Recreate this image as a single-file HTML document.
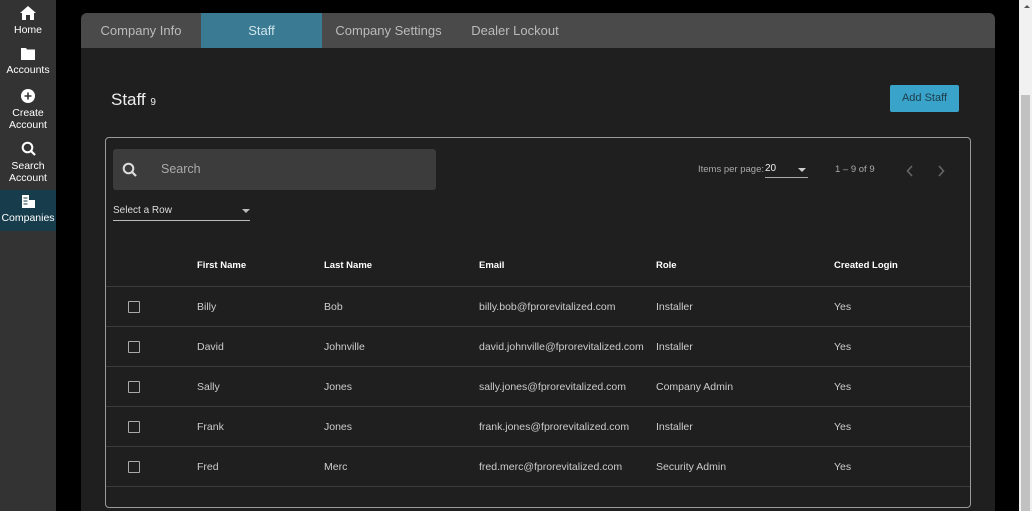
<!DOCTYPE html>
<html style="width:1032px;height:511px;overflow:hidden"><head><meta charset="utf-8"><style>
*{margin:0;padding:0;box-sizing:border-box}
body{width:1032px;height:511px;background:#000;font-family:"Liberation Sans",sans-serif;position:relative;overflow:hidden;color:#ddd}
.side{position:absolute;left:0;top:0;width:56px;height:511px;background:#333}
.nav{position:absolute;left:0;width:56px;text-align:center;font-size:10.5px;color:#fff;line-height:12px}
.nav svg{display:block;margin:0 auto 4px}
.card{position:absolute;left:81px;top:13px;width:914px;height:498px;background:#1f1f1f;border-radius:6px 6px 0 0;overflow:hidden}
.tabs{height:35px;background:#4a4a4a;position:relative}
.tab{position:absolute;top:0;height:35px;line-height:35px;font-size:13px;color:#bbb;text-align:center}
.abs{position:absolute}
.box{position:absolute;left:24px;top:124px;width:866px;height:371px;border:1px solid #9a9a9a;border-radius:4px}
.row{position:absolute;left:0;width:864px;height:40px;border-top:1px solid #3c3c3c;font-size:10.5px;color:#ccc}
.row span{position:absolute;top:14px}
.cb{position:absolute;left:22px;top:14px;width:12px;height:12px;border:1.5px solid #aaa;border-radius:1px}
.hd span{position:absolute;top:122px;font-size:9.5px;font-weight:bold;color:#fff}
.sb{position:absolute;left:1019px;top:0;width:13px;height:511px;background:#f1f1f1}
</style></head><body>
<div class="side">
 <div class="nav" style="top:6px"><svg width="16" height="14" viewBox="0 0 16 14"><path d="M8 0L0 7h2v7h4V9h4v5h4V7h2z" fill="#fff"/></svg>Home</div>
 <div class="nav" style="top:47px"><svg width="14" height="13" viewBox="0 0 14 13"><path d="M0 1h5l1 1.5h8V13H0z" fill="#fff"/></svg>Accounts</div>
 <div class="nav" style="top:89px"><svg width="14" height="14" viewBox="0 0 14 14"><circle cx="7" cy="7" r="7" fill="#fff"/><path d="M7 3.5v7M3.5 7h7" stroke="#333" stroke-width="1.6"/></svg>Create<br>Account</div>
 <div class="nav" style="top:141px"><svg width="15" height="15" viewBox="0 0 15 15"><circle cx="6.5" cy="6.5" r="4.8" fill="none" stroke="#fff" stroke-width="2"/><path d="M10 10l4 4" stroke="#fff" stroke-width="2.2"/></svg>Search<br>Account</div>
 <div style="position:absolute;left:0;top:190px;width:56px;height:41px;background:#173d4c"></div>
 <div class="nav" style="top:195px"><svg width="15" height="13" viewBox="0 0 15 13"><path d="M1 0h7v13H1z" fill="#fff"/><path d="M8 5h6v8H8z" fill="#fff"/><path d="M2.5 3h4M2.5 6h4M2.5 9h4" stroke="#173d4c" stroke-width="1"/></svg>Companies</div>
</div>
<div class="card">
 <div class="tabs">
  <div class="tab" style="left:0;width:120px">Company Info</div>
  <div class="tab" style="left:120px;width:121px;background:#3a7b93;color:#cfe3ea">Staff</div>
  <div class="tab" style="left:241px;width:133px">Company Settings</div>
  <div class="tab" style="left:374px;width:120px">Dealer Lockout</div>
 </div>
 <div class="abs" style="left:30px;top:77px;font-size:17px;color:#eee">Staff <span style="font-size:10px">9</span></div>
 <div class="abs" style="left:809px;top:72px;width:69px;height:27px;background:#3aa3c9;border-radius:2px;font-size:11px;color:#1d3d4b;text-align:center;line-height:27px">Add Staff</div>
 <div class="box">
  <div class="abs" style="left:7px;top:11px;width:323px;height:41px;background:#3c3c3c;border-radius:3px">
   <svg class="abs" style="left:9px;top:13px" width="15" height="15" viewBox="0 0 15 15"><circle cx="6.5" cy="6.5" r="4.8" fill="none" stroke="#ddd" stroke-width="2"/><path d="M10 10l4 4" stroke="#ddd" stroke-width="2.2"/></svg>
   <span class="abs" style="left:48px;top:13px;font-size:12.5px;color:#aaa">Search</span>
  </div>
  <div class="abs" style="left:7px;top:67px;width:137px;height:16px;border-bottom:1px solid #bbb;font-size:10px;color:#ddd">Select a Row<span class="abs" style="right:0;top:4px;border:4px solid transparent;border-top:4px solid #bbb;border-bottom:0"></span></div>
  <span class="abs" style="left:592px;top:26px;font-size:9.5px;color:#aaa">Items per page:</span>
  <div class="abs" style="left:659px;top:25px;width:43px;height:15px;border-bottom:1px solid #aaa;font-size:10px;color:#eee">20<span class="abs" style="right:2px;top:5px;border:4px solid transparent;border-top:4px solid #ccc;border-bottom:0"></span></div>
  <span class="abs" style="left:729px;top:26px;font-size:9.5px;color:#aaa">1 – 9 of 9</span>
  <svg class="abs" style="left:800px;top:27px" width="8" height="12" viewBox="0 0 8 12"><path d="M6 1L1.5 6 6 11" fill="none" stroke="#666" stroke-width="1.6"/></svg>
  <svg class="abs" style="left:831px;top:27px" width="8" height="12" viewBox="0 0 8 12"><path d="M2 1l4.5 5L2 11" fill="none" stroke="#666" stroke-width="1.6"/></svg>
  <div class="hd"><span style="left:91px">First Name</span><span style="left:218px">Last Name</span><span style="left:373px">Email</span><span style="left:550px">Role</span><span style="left:728px">Created Login</span></div>
  <div class="row" style="top:148px"><div class="cb"></div><span style="left:91px">Billy</span><span style="left:218px">Bob</span><span style="left:373px">billy.bob@fprorevitalized.com</span><span style="left:550px">Installer</span><span style="left:728px">Yes</span></div>
  <div class="row" style="top:188px"><div class="cb"></div><span style="left:91px">David</span><span style="left:218px">Johnville</span><span style="left:373px">david.johnville@fprorevitalized.com</span><span style="left:550px">Installer</span><span style="left:728px">Yes</span></div>
  <div class="row" style="top:228px"><div class="cb"></div><span style="left:91px">Sally</span><span style="left:218px">Jones</span><span style="left:373px">sally.jones@fprorevitalized.com</span><span style="left:550px">Company Admin</span><span style="left:728px">Yes</span></div>
  <div class="row" style="top:268px"><div class="cb"></div><span style="left:91px">Frank</span><span style="left:218px">Jones</span><span style="left:373px">frank.jones@fprorevitalized.com</span><span style="left:550px">Installer</span><span style="left:728px">Yes</span></div>
  <div class="row" style="top:308px"><div class="cb"></div><span style="left:91px">Fred</span><span style="left:218px">Merc</span><span style="left:373px">fred.merc@fprorevitalized.com</span><span style="left:550px">Security Admin</span><span style="left:728px">Yes</span></div>
  <div class="row" style="top:348px;height:20px"></div>
 </div>
</div>
<div class="sb"><div style="position:absolute;left:5px;top:5px;border:3px solid transparent;border-bottom:3px solid #555;border-top:0"></div><div style="position:absolute;left:2px;top:95px;width:9px;height:416px;background:#c1c1c1"></div></div>
</body></html>
